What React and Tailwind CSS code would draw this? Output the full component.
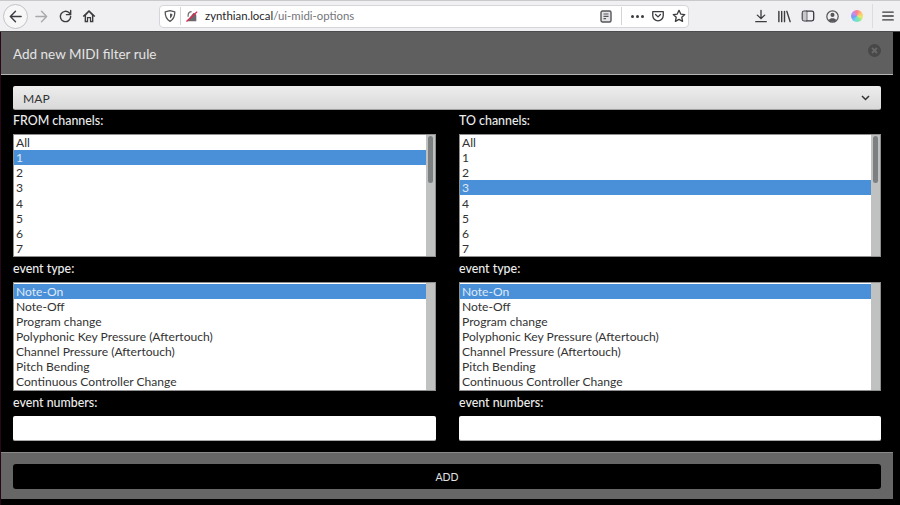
import React from "react";

const channels = ["All", "1", "2", "3", "4", "5", "6", "7"];
const events = ["Note-On", "Note-Off", "Program change", "Polyphonic Key Pressure (Aftertouch)", "Channel Pressure (Aftertouch)", "Pitch Bending", "Continuous Controller Change"];

function Icon({ className = "", children, w = 16, h = 16 }) {
  return (
    <svg width={w} height={h} viewBox="0 0 16 16" fill="none" stroke="#3b3b40" strokeWidth="1.5" strokeLinecap="round" strokeLinejoin="round" className={className}>
      {children}
    </svg>
  );
}

function ListBox({ items, selected, heightClass, thumbClass, padClass, gapClass }) {
  return (
    <div className={`flex ${heightClass} bg-white border border-[#8f8f8f] overflow-hidden`}>
      <div className={`flex-1 min-w-0 ${padClass}`}>
        {items.map((t, i) => (
          <div key={t} className={`h-[15px] leading-[15px] pl-[2px] text-[12.1px] whitespace-nowrap ${gapClass} ${i === selected ? "bg-[#4a90d9] text-[#dfe9f5]" : "text-[#333333]"}`}>
            {t}
          </div>
        ))}
      </div>
      <div className="w-[9px] shrink-0 bg-[#c0c2c2] flex justify-center pt-px">
        {thumbClass ? <div className={`w-[5px] rounded-[3px] bg-[#7d8080] ${thumbClass}`} /> : null}
      </div>
    </div>
  );
}

function Column({ channelLabel, channelSelected }) {
  return (
    <div className="flex flex-col">
      <div className="h-[24px] leading-[21px] text-[12.4px] font-medium text-[#ececec]">{channelLabel}</div>
      <ListBox items={channels} selected={channelSelected} heightClass="h-[123px]" thumbClass="h-[47px]" padClass="pt-0" gapClass="mb-[0.14px]" />
      <div className="h-[25px] leading-[24px] text-[12.4px] font-medium text-[#ececec]">event type:</div>
      <ListBox items={events} selected={0} heightClass="h-[109px]" padClass="pt-px" gapClass="mb-0" />
      <div className="h-[25px] leading-[23px] text-[12.4px] font-medium text-[#ececec]">event numbers:</div>
      <div className="h-[25px] bg-white border-b border-[#a8a8a8] rounded-[2px]" />
    </div>
  );
}

export default function App() {
  return (
    <div className="w-[900px] h-[505px] bg-black overflow-hidden flex flex-col font-['Lato','Open_Sans',sans-serif]">
      {/* Browser chrome */}
      <div className="h-px shrink-0 bg-[#c9c9cc]" />
      <div className="h-[31px] shrink-0 bg-[#f0f0f2] border-b border-[#4c4c4c] flex items-center text-[#3b3b40]">
        <div className="ml-[3px] w-[25px] h-[25px] rounded-full border border-[#c4c4c8] bg-[#f7f7f8] flex items-center justify-center">
          <Icon w={15} h={15}><path d="M14 8H2.500M8 2.500 2.500 8 8 13.500" /></Icon>
        </div>
        <Icon className="ml-[6px]" w={15} h={15}><path d="M2 8h11.500M8 2.500 13.500 8 8 13.500" stroke="#a9a9ad" /></Icon>
        <Icon className="ml-[9px]" w={15} h={15}><path d="M13.500 8a5.500 5.500 0 1 1-1.600-3.900L13.500 6M13.500 1.500V6H9" /></Icon>
        <svg width="14" height="14" viewBox="0 0 16 16" className="ml-[9px]">
          <path d="M8 1 .8 8l1.200 1.200 1-1V15h4v-4.500h2V15h4V8.200l1 1L15.200 8Z" fill="#3b3b40" />
          <path d="M8 3.800 4.700 7v6.400H5.700V9h4.600v4.400h1V7Z" fill="#f0f0f2" />
        </svg>
        <div className="ml-[63px] w-[530px] h-[23px] bg-white rounded-[4px] border border-[#d6d6da] flex items-center">
          <Icon className="ml-[3px]" w={14} h={14}><path d="M8 1.800 13.500 3.400c0 5-1.500 8.500-5.500 10.800C4 11.900 2.500 8.400 2.500 3.400Z" stroke="#55555a" /><path d="M8 5 10.700 5.800c0 2.500-.8 3.800-2.700 5Z" fill="#55555a" stroke="none" /></Icon>
          <div className="ml-[3px] w-px h-[18px] bg-[#d4d4d8]" />
          <svg width="12" height="14" viewBox="0 0 14 14" className="ml-[5px]">
            <path d="M1 13 8.500 3.500Q12 3.500 12 7V13Z" fill="#6a6a6e" />
            <path d="M2.500 8V5.500Q3 2 6.500 2" fill="none" stroke="#6a6a6e" strokeWidth="1.400" />
            <path d="M.5 13.500 13 2" stroke="#e2284a" strokeWidth="1.500" />
          </svg>
          <span className="ml-[7px] text-[11.4px] leading-none whitespace-nowrap">
            <span className="text-[#26262a]">zynthian.local</span>
            <span className="text-[#75757a]">/ui-midi-options</span>
          </span>
          <div className="ml-auto flex items-center">
            <svg width="12" height="13" viewBox="0 0 12 13">
              <rect x="1" y="1" width="10" height="11" rx="1.500" fill="#e4e4e6" stroke="#55555a" strokeWidth="1.400" />
              <path d="M3.500 4h5M3.500 6.300h5M3.500 8.600h2.500" stroke="#55555a" strokeWidth="1.200" />
            </svg>
            <div className="ml-[9px] w-px h-[18px] bg-[#d4d4d8]" />
            <div className="ml-[9px] flex gap-[2px]">
              <div className="w-[3px] h-[3px] rounded-full bg-[#3b3b40]" />
              <div className="w-[3px] h-[3px] rounded-full bg-[#3b3b40]" />
              <div className="w-[3px] h-[3px] rounded-full bg-[#3b3b40]" />
            </div>
            <Icon className="ml-[7px]" w={14} h={14}><path d="M2 3h12v4.500a6 6 0 0 1-12 0ZM5.200 6.300 8 9l2.800-2.700" /></Icon>
            <Icon className="ml-[7px] mr-[2px]" w={14} h={14}><path d="m8 1.500 2 4.300 4.600.6-3.400 3.100.9 4.600L8 11.800l-4.100 2.300.9-4.600L1.400 6.400 6 5.800Z" /></Icon>
          </div>
        </div>
        <Icon className="ml-[65px]" w={14} h={14}><path d="M8 1.500v9.500M3.800 7 8 11l4.200-4M2 14.500h12" /></Icon>
        <Icon className="ml-[9px]" w={15} h={15}><path d="M2 2.500v11M5 2.500v11M8 2.500v11M10.500 2.500l3.500 11" /></Icon>
        <Icon className="ml-[9px]" w={14} h={14}><rect x="1.500" y="2.500" width="13" height="11" rx="2" /><path d="M6.500 2.500v11" /><path d="M2 3h4.500v10H2Z" fill="#c8c8cc" stroke="none" /></Icon>
        <svg width="13" height="13" viewBox="0 0 16 16" className="ml-[11px]">
          <circle cx="8" cy="8" r="7" fill="none" stroke="#55555a" strokeWidth="1.500" />
          <circle cx="8" cy="6" r="2.500" fill="#55555a" />
          <path d="M3.500 12.500c1-3 8-3 9 0a6 6 0 0 1-9 0Z" fill="#55555a" />
        </svg>
        <div className="ml-[12px] w-[12px] h-[12px] rounded-full bg-[conic-gradient(#ff7b8e,#ffc06b,#e8e96c,#7fe89f,#6fd8e8,#7a9cf0,#c58cf0,#ff7b8e)]" />
        <div className="ml-[9px] w-px h-[24px] bg-[#dcdcde]" />
        <Icon className="ml-[8px]" w={14} h={14}><path d="M2 3.500h12M2 8h12M2 12.500h12" /></Icon>
      </div>

      {/* Modal */}
      <div className="w-[893px] flex-1 border-l border-[#2a0716] flex flex-col">
        <div className="h-[43px] shrink-0 bg-[#5f5f5f] border-b border-[#b5b5b5] pl-[12px] pr-[10px] flex items-center justify-between">
          <span className="text-[13.5px] text-[#e4e4e4] pt-[3px]">Add new MIDI filter rule</span>
          <div className="w-[13px] h-[13px] -mt-[5px] mr-[2px] rounded-full bg-[#484848] flex items-center justify-center">
            <svg width="7" height="7" viewBox="0 0 7 7"><path d="M1 1l5 5M6 1 1 6" stroke="#686868" strokeWidth="1.800" /></svg>
          </div>
        </div>
        <div className="flex-1 px-[12px] pt-[11px]">
          <div className="h-[24px] w-[868px] rounded-[2px] bg-gradient-to-b from-[#ededed] to-[#d9d9d9] border-b border-[#a0a0a0] pl-[10px] pr-[11px] flex items-center justify-between text-[12.1px] text-[#333333]">
            <span className="pt-[4px]">MAP</span>
            <svg width="9" height="6" viewBox="0 0 9 6"><path d="M1 1l3.500 3.500L8 1" fill="none" stroke="#333333" strokeWidth="1.500" /></svg>
          </div>
          <div className="w-[868px] grid grid-cols-[423px_422px] gap-x-[23px]">
            <Column channelLabel="FROM channels:" channelSelected={1} />
            <Column channelLabel="TO channels:" channelSelected={3} />
          </div>
        </div>
        <div className="h-[47px] shrink-0 mb-[6px] bg-[#666666] border-t border-[#8a8a8a] px-[12px] pt-[11px]">
          <div className="h-[25px] w-[868px] bg-black rounded-[3px] flex items-center justify-center text-[10.5px] text-[#e0e0e0] pt-[3px]">ADD</div>
        </div>
      </div>
    </div>
  );
}
